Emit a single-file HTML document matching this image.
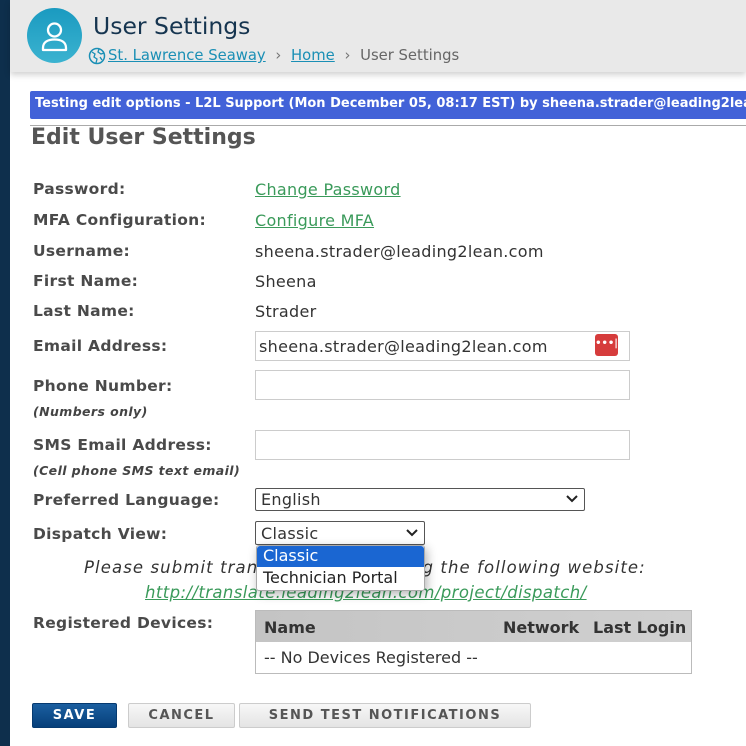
<!DOCTYPE html>
<html><head><style>
body{margin:0;width:746px;height:746px;overflow:hidden;background:#fff;font-family:"DejaVu Sans","Liberation Sans",sans-serif;position:relative}
.a{position:absolute;white-space:nowrap}
.lbl{position:absolute;left:33px;font-weight:bold;font-size:15.5px;color:#4a4a4a;white-space:nowrap;letter-spacing:0.3px}
.val{position:absolute;left:255px;font-size:16px;color:#333;white-space:nowrap;letter-spacing:0.3px}
.lnk{color:#3a9a5a;text-decoration:underline}
.sm{position:absolute;left:33px;font-size:12.5px;font-weight:bold;font-style:italic;color:#444;letter-spacing:0.4px}
.inp{position:absolute;left:255px;width:373px;border:1px solid #ccc;background:#fff}
.btn{position:absolute;top:703px;height:23px;border:1px solid #ccc;border-radius:2px;background:linear-gradient(#f7f7f7,#e4e4e4);font-weight:bold;font-size:13px;letter-spacing:1.5px;color:#555;text-align:center;line-height:23px}
</style></head><body>
<div class="a" style="left:0;top:0;width:10px;height:746px;background:#0e2f4c"></div>
<div class="a" style="left:10px;top:0;width:736px;height:72px;background:#e9e9e9;box-shadow:0 3px 6px rgba(0,0,0,.18)"></div>
<div class="a" style="left:27px;top:8px;width:55px;height:55px;border-radius:50%;background:linear-gradient(#1a9ac0,#3bb3d0)"></div>
<svg class="a" style="left:27px;top:8px" width="55" height="55" viewBox="0 0 55 55"><circle cx="27.5" cy="22" r="6.5" fill="none" stroke="#fff" stroke-width="2.3"/><path d="M16 40c0-6 5-8.5 11.5-8.5S39 34 39 40v2H16z" fill="none" stroke="#fff" stroke-width="2.3" stroke-linejoin="round"/></svg>
<div class="a" style="left:93px;top:12px;font-size:23.5px;color:#163550">User Settings</div>
<svg class="a" style="left:88px;top:47px" width="18" height="18" viewBox="0 0 18 18"><circle cx="9" cy="9" r="7.5" fill="none" stroke="#1a8fb5" stroke-width="1.5"/><path d="M4 5l3 2-1 3 3 2-1 4M11 2l-1 3 3 2 3-1M12 10l2 3" fill="none" stroke="#1a8fb5" stroke-width="1.3"/></svg>
<div class="a" style="left:108px;top:47px;font-size:14.8px;color:#1a8fb5"><u>St. Lawrence Seaway</u> <span style="color:#777;margin:0 5px">›</span> <u>Home</u> <span style="color:#777;margin:0 5px">›</span> <span style="color:#666">User Settings</span></div>
<div class="a" style="left:30px;top:91px;width:716px;height:28px;background:#4262d8;border-radius:2px 0 0 2px;overflow:hidden"><div class="a" style="left:5px;top:5px;font-size:13px;font-weight:bold;color:#fff">Testing edit options - L2L Support (Mon December 05, 08:17 EST) by sheena.strader@leading2lean.com</div></div>
<div class="a" style="left:30px;top:125px;width:716px;height:1px;background:#aaa"></div>
<div class="a" style="left:31px;top:125px;font-size:22px;font-weight:bold;color:#555">Edit User Settings</div>
<div class="lbl" style="top:180px">Password:</div><div class="val lnk" style="top:180px">Change Password</div>
<div class="lbl" style="top:211px">MFA Configuration:</div><div class="val lnk" style="top:211px">Configure MFA</div>
<div class="lbl" style="top:242px">Username:</div><div class="val" style="top:242px">sheena.strader@leading2lean.com</div>
<div class="lbl" style="top:272px">First Name:</div><div class="val" style="top:272px">Sheena</div>
<div class="lbl" style="top:302px">Last Name:</div><div class="val" style="top:302px">Strader</div>
<div class="lbl" style="top:337px">Email Address:</div>
<div class="inp" style="top:331px;height:28px"></div>
<div class="val" style="left:259px;top:337px">sheena.strader@leading2lean.com</div>
<div class="a" style="left:595px;top:334px;width:23px;height:22px;background:#d63c3c;border-radius:3px;color:#fff;font-size:10px;line-height:20px;text-align:center;font-weight:bold">•••|</div>
<div class="lbl" style="top:377px">Phone Number:</div>
<div class="sm" style="top:404px">(Numbers only)</div>
<div class="inp" style="top:370px;height:28px"></div>
<div class="lbl" style="top:436px">SMS Email Address:</div>
<div class="sm" style="top:463px">(Cell phone SMS text email)</div>
<div class="inp" style="top:430px;height:28px"></div>
<div class="lbl" style="top:491px">Preferred Language:</div>
<div class="a" style="left:255px;top:488px;width:328px;height:21px;border:1px solid #555;border-radius:2px"></div>
<div class="val" style="left:261px;top:490px">English</div>
<svg class="a" style="left:566px;top:494px" width="12" height="10"><path d="M1 2l5 5 5-5" fill="none" stroke="#222" stroke-width="2"/></svg>
<div class="lbl" style="top:525px">Dispatch View:</div>
<div class="a" style="left:255px;top:521px;width:168px;height:22px;border:1px solid #555;border-radius:2px"></div>
<div class="val" style="left:261px;top:524px">Classic</div>
<svg class="a" style="left:406px;top:528px" width="12" height="10"><path d="M1 2l5 5 5-5" fill="none" stroke="#222" stroke-width="2"/></svg>
<div class="a" style="left:84px;top:558px;font-size:16.5px;font-style:italic;color:#333;letter-spacing:1.1px">Please submit translations by visiting the following website:</div>
<div class="a" style="left:145px;top:583px;font-size:16.5px;font-style:italic;color:#3a9a5a;text-decoration:underline;letter-spacing:0.4px">http://translate.leading2lean.com/project/dispatch/</div>
<div class="a" style="left:256px;top:545px;width:167px;height:44px;background:#fff;border:1px solid #aaa;border-radius:3px;box-shadow:2px 3px 10px rgba(0,0,0,.3)"></div>
<div class="a" style="left:257px;top:546px;width:167px;height:21px;background:#1a66d2;border-radius:3px 3px 0 0"></div>
<div class="a" style="left:263px;top:546px;font-size:16px;color:#fff">Classic</div>
<div class="a" style="left:263px;top:568px;font-size:16px;color:#222">Technician Portal</div>
<div class="lbl" style="top:614px">Registered Devices:</div>
<div class="a" style="left:255px;top:610px;width:435px;height:62px;border:1px solid #bbb"></div>
<div class="a" style="left:256px;top:611px;width:435px;height:31px;background:linear-gradient(90deg,#c4c4c4,#d0d0d0)"></div>
<div class="a" style="left:264px;top:618px;font-size:16px;font-weight:bold;color:#333">Name</div>
<div class="a" style="left:503px;top:618px;font-size:16px;font-weight:bold;color:#333">Network</div>
<div class="a" style="left:593px;top:618px;font-size:16px;font-weight:bold;color:#333">Last Login</div>
<div class="a" style="left:264px;top:648px;font-size:16px;color:#333">-- No Devices Registered --</div>
<div class="btn" style="left:32px;width:83px;background:linear-gradient(#1b5fa0,#063f7a);border-color:#063a70;color:#fff">SAVE</div>
<div class="btn" style="left:128px;width:105px">CANCEL</div>
<div class="btn" style="left:239px;width:290px">SEND TEST NOTIFICATIONS</div>
</body></html>
